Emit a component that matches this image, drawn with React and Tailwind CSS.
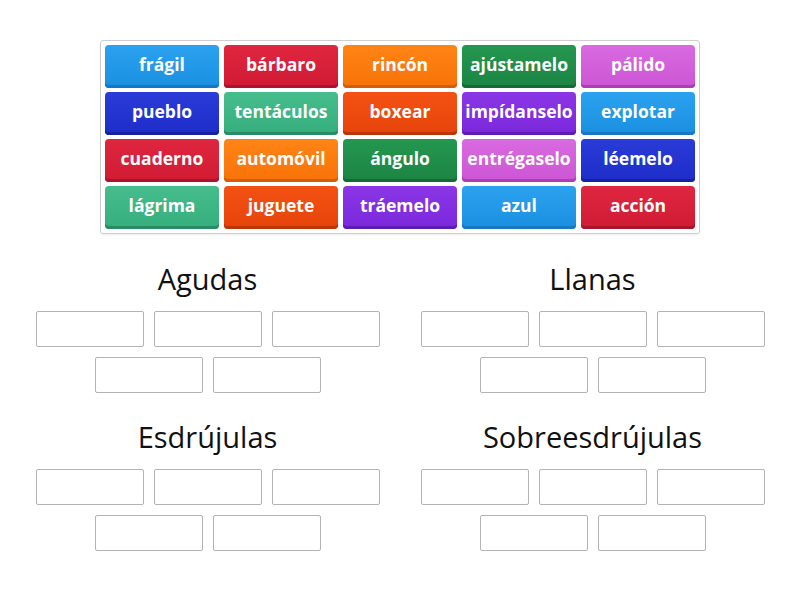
const colors = {
  blue: "bg-[linear-gradient(#2ba2f0,#1a8fe0)] shadow-[inset_0_-3px_0_#1677c4]",
  red: "bg-[linear-gradient(#e02640,#cf1b33)] shadow-[inset_0_-3px_0_#a8142a]",
  orange: "bg-[linear-gradient(#ff8416,#f87208)] shadow-[inset_0_-3px_0_#d35f04]",
  green: "bg-[linear-gradient(#24974f,#1c8444)] shadow-[inset_0_-3px_0_#146a35]",
  pink: "bg-[linear-gradient(#d96ae0,#cc55d4)] shadow-[inset_0_-3px_0_#a93fb1]",
  navy: "bg-[linear-gradient(#2a3bd8,#1e2dc8)] shadow-[inset_0_-3px_0_#1620a0]",
  teal: "bg-[linear-gradient(#45bd8c,#36ad7d)] shadow-[inset_0_-3px_0_#278c63]",
  flame: "bg-[linear-gradient(#f45214,#e6430a)] shadow-[inset_0_-3px_0_#bd3506]",
  purple: "bg-[linear-gradient(#8a36e6,#7b28dc)] shadow-[inset_0_-3px_0_#601bb4]",
}

const tiles = [
  ["frágil", "blue"],
  ["bárbaro", "red"],
  ["rincón", "orange"],
  ["ajústamelo", "green"],
  ["pálido", "pink"],
  ["pueblo", "navy"],
  ["tentáculos", "teal"],
  ["boxear", "flame"],
  ["impídanselo", "purple"],
  ["explotar", "blue"],
  ["cuaderno", "red"],
  ["automóvil", "orange"],
  ["ángulo", "green"],
  ["entrégaselo", "pink"],
  ["léemelo", "navy"],
  ["lágrima", "teal"],
  ["juguete", "flame"],
  ["tráemelo", "purple"],
  ["azul", "blue"],
  ["acción", "red"],
]

const groups = ["Agudas", "Llanas", "Esdrújulas", "Sobreesdrújulas"]

export default function App() {
  return (
    <div className="w-[800px] h-[600px] bg-white font-['Open_Sans',sans-serif] overflow-hidden">
      {/* tiles */}
      <div className="mx-auto mt-[40px] w-[600px] border border-[#cfcfcf] rounded-[3px] p-[4px] shadow-[0_1px_2px_rgba(0,0,0,0.08)]">
        <div className="grid grid-cols-5 gap-x-[5px] gap-y-[4px]">
          {tiles.map(([word, c]) => (
            <div
              key={word}
              className={`h-[43px] rounded-[4px] flex items-center justify-center text-white font-bold text-[17.5px] pb-[5px] ${colors[c]}`}
            >
              {word}
            </div>
          ))}
        </div>
      </div>

      {/* groups */}
      <div className="grid grid-cols-2 gap-x-[40px] px-[35px] mt-[25px] gap-y-[24px]">
        {groups.map((g) => (
          <div key={g}>
            <h2 className="text-[29px] leading-[40px] text-[#111] text-center">{g}</h2>
            <div className="mt-[12px] flex flex-wrap justify-center gap-x-[10px] gap-y-[10px]">
              {[0, 1, 2, 3, 4].map((i) => (
                <div key={i} className="w-[108px] h-[36px] border border-[#b3b3b3] rounded-[2px] bg-white" />
              ))}
            </div>
          </div>
        ))}
      </div>
    </div>
  )
}
